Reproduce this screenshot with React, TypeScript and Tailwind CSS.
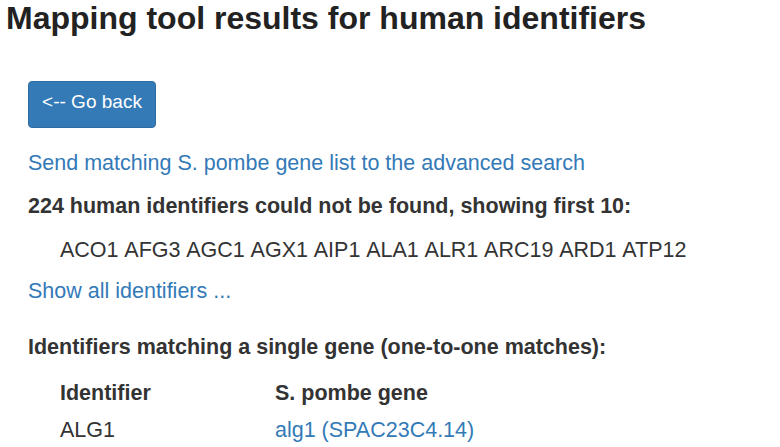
const notFound = ['ACO1', 'AFG3', 'AGC1', 'AGX1', 'AIP1', 'ALA1', 'ALR1', 'ARC19', 'ARD1', 'ATP12'];

export default function App() {
  return (
    <div className="min-h-[447px] bg-white text-[#333] font-['Liberation_Sans',Arial,sans-serif]">
      <h1 className="pl-[6px] h-[36px] leading-[36px] text-[32px] font-bold text-[#222]">
        Mapping tool results for human identifiers
      </h1>

      <div className="pl-[28px]">
        <button className="mt-[45px] w-[128px] h-[47px] pb-[6px] rounded-[4px] bg-[#337ab7] border border-[#2e6da4] text-white text-[19px] leading-none flex items-center justify-center">
          &lt;-- Go back
        </button>

        <a className="block mt-[21px] text-[21.5px] leading-[28px] text-[#337ab7]">
          Send matching S. pombe gene list to the advanced search
        </a>

        <p className="mt-[15px] text-[21.5px] leading-[28px] font-bold">
          224 human identifiers could not be found, showing first 10:
        </p>

        <div className="mt-[16px] pl-[32px] text-[21.5px] leading-[28px] [word-spacing:1px]">
          {notFound.join(' ')}
        </div>

        <a className="block mt-[13px] text-[21.5px] leading-[28px] text-[#337ab7]">Show all identifiers ...</a>

        <p className="mt-[28px] text-[21.5px] leading-[28px] font-bold">
          Identifiers matching a single gene (one-to-one matches):
        </p>

        <table className="mt-[13px] ml-[32px] text-[21.5px]">
          <thead>
            <tr className="h-[38px]">
              <th className="w-[215px] text-left font-bold align-middle">Identifier</th>
              <th className="text-left font-bold align-middle">S. pombe gene</th>
            </tr>
          </thead>
          <tbody>
            <tr className="h-[36px]">
              <td>ALG1</td>
              <td>
                <a className="text-[#337ab7]">alg1 (SPAC23C4.14)</a>
              </td>
            </tr>
          </tbody>
        </table>
      </div>
    </div>
  );
}
